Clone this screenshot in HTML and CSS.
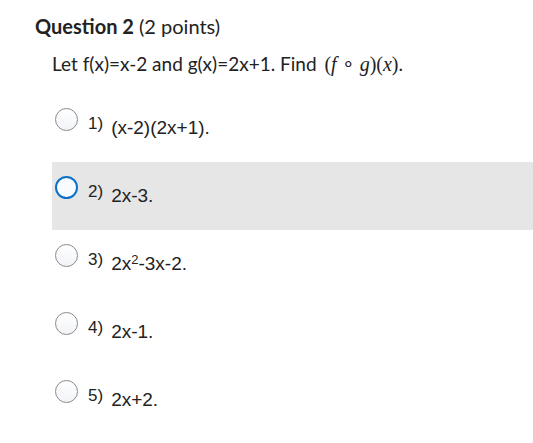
FILE: index.html
```html
<!DOCTYPE html>
<html>
<head>
<meta charset="utf-8">
<link rel="stylesheet" href="styles.css">
</head>
<body>
<div class="quiz">
  <h2 class="title"><span class="qnum">Question 2</span> (2 points)</h2>
  <p class="prompt">Let f(x)=x-2 and g(x)=2x+1. Find <span class="math">(<i>f</i> ∘ <i>g</i>)(<i>x</i>)</span>.</p>
  <div class="options">
    <div class="option">
      <span class="radio"></span>
      <span class="label">1)</span>
      <span class="answer">(x-2)(2x+1).</span>
    </div>
    <div class="option selected">
      <span class="radio focus"></span>
      <span class="label">2)</span>
      <span class="answer">2x-3.</span>
    </div>
    <div class="option">
      <span class="radio"></span>
      <span class="label">3)</span>
      <span class="answer">2x<sup class="sup">2</sup>-3x-2.</span>
    </div>
    <div class="option">
      <span class="radio"></span>
      <span class="label">4)</span>
      <span class="answer">2x-1.</span>
    </div>
    <div class="option">
      <span class="radio"></span>
      <span class="label">5)</span>
      <span class="answer">2x+2.</span>
    </div>
  </div>
</div>
</body>
</html>
```
FILE: styles.css
```css
html, body {
  margin: 0;
  padding: 0;
  background: #ffffff;
}
.quiz {
  padding-top: 15px;
  padding-left: 35px;
  color: #222222;
}
.title {
  margin: 0;
  font-family: Lato, "Liberation Sans", sans-serif;
  font-size: 20px;
  font-weight: 400;
  line-height: 23px;
}
.qnum {
  font-weight: 700;
}
.prompt {
  margin: 14px 0 0 17px;
  font-family: Lato, "Liberation Sans", sans-serif;
  font-size: 19px;
  line-height: 23px;
}
.math {
  font-family: "Liberation Serif", serif;
  font-size: 20px;
  margin-left: 3px;
}
.options {
  margin-top: 18px;
  margin-left: 17px;
}
.option {
  display: flex;
  align-items: flex-start;
  height: 68px;
  padding-left: 3px;
  box-sizing: border-box;
  font-family: "Liberation Sans", Arial, sans-serif;
  color: #222222;
}
.option.selected {
  background: #e6e6e6;
}
.radio {
  width: 21px;
  height: 21px;
  margin-top: 14px;
  border: 1px solid #8a8a8a;
  border-radius: 50%;
  background: linear-gradient(#ffffff, #f2f4f8);
  flex: none;
}
.radio.focus {
  width: 19px;
  height: 19px;
  border: 2.5px solid #0b72c8;
  background: #f8fbff;
}
.label {
  margin-left: 10px;
  margin-top: 20px;
  font-size: 17px;
  line-height: 20px;
}
.answer {
  margin-left: 8px;
  margin-top: 23px;
  font-size: 19px;
  line-height: 22px;
}
.sup {
  font-size: 13px;
  line-height: 0;
  vertical-align: 6px;
}
```
